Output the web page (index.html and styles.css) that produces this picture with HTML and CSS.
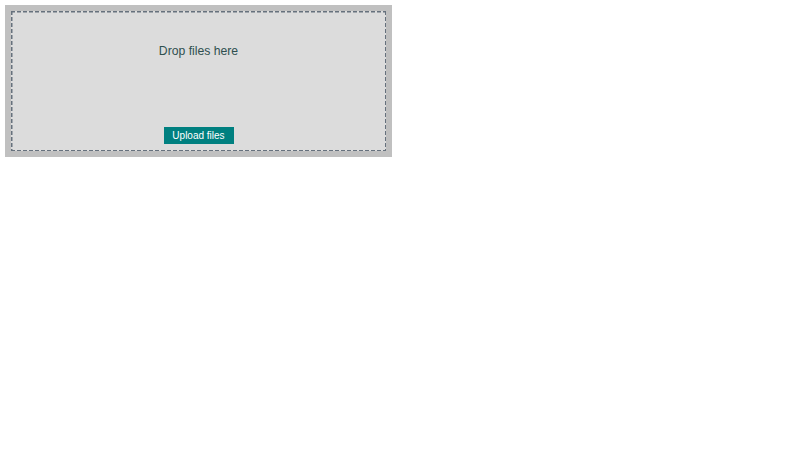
FILE: index.html
```html
<!DOCTYPE html>
<html>
<head>
<meta charset="utf-8">
<link rel="stylesheet" href="styles.css">
</head>
<body>
<div class="dropzone">
  <div class="area">
    <div class="label">Drop files here</div>
    <button class="upload">Upload files</button>
  </div>
</div>
</body>
</html>
```
FILE: styles.css
```css
html, body { margin: 0; padding: 0; background: #fff; }
body { font-family: "Liberation Sans", Arial, sans-serif; }
.dropzone {
  box-sizing: border-box;
  margin: 5px;
  width: 387px;
  height: 152px;
  padding: 6px;
  background: #c0c0c0;
}
.area {
  box-sizing: border-box;
  height: 100%;
  background-color: #dcdcdc;
  background-image:
    repeating-linear-gradient(90deg, #66717d 0 4px, transparent 4px 6px),
    repeating-linear-gradient(90deg, #66717d 0 4px, transparent 4px 6px),
    repeating-linear-gradient(180deg, #66717d 0 4px, transparent 4px 6px),
    repeating-linear-gradient(180deg, #66717d 0 4px, transparent 4px 6px);
  background-size: 100% 1.5px, 100% 1.5px, 1.5px 100%, 1.5px 100%;
  background-position: 0 0, 0 100%, 0 0, 100% 0;
  background-repeat: no-repeat;
  display: flex;
  flex-direction: column;
  align-items: center;
  justify-content: space-between;
  padding: 33px 0 7px;
}
.label {
  font-size: 12.2px;
  line-height: 14px;
  color: #2f4f4f;
}
.upload {
  font-family: "Liberation Sans", Arial, sans-serif;
  font-size: 10px;
  line-height: 17px;
  height: 17px;
  width: 70px;
  padding: 0;
  border: 0;
  background: #008080;
  color: #fff;
}
```
